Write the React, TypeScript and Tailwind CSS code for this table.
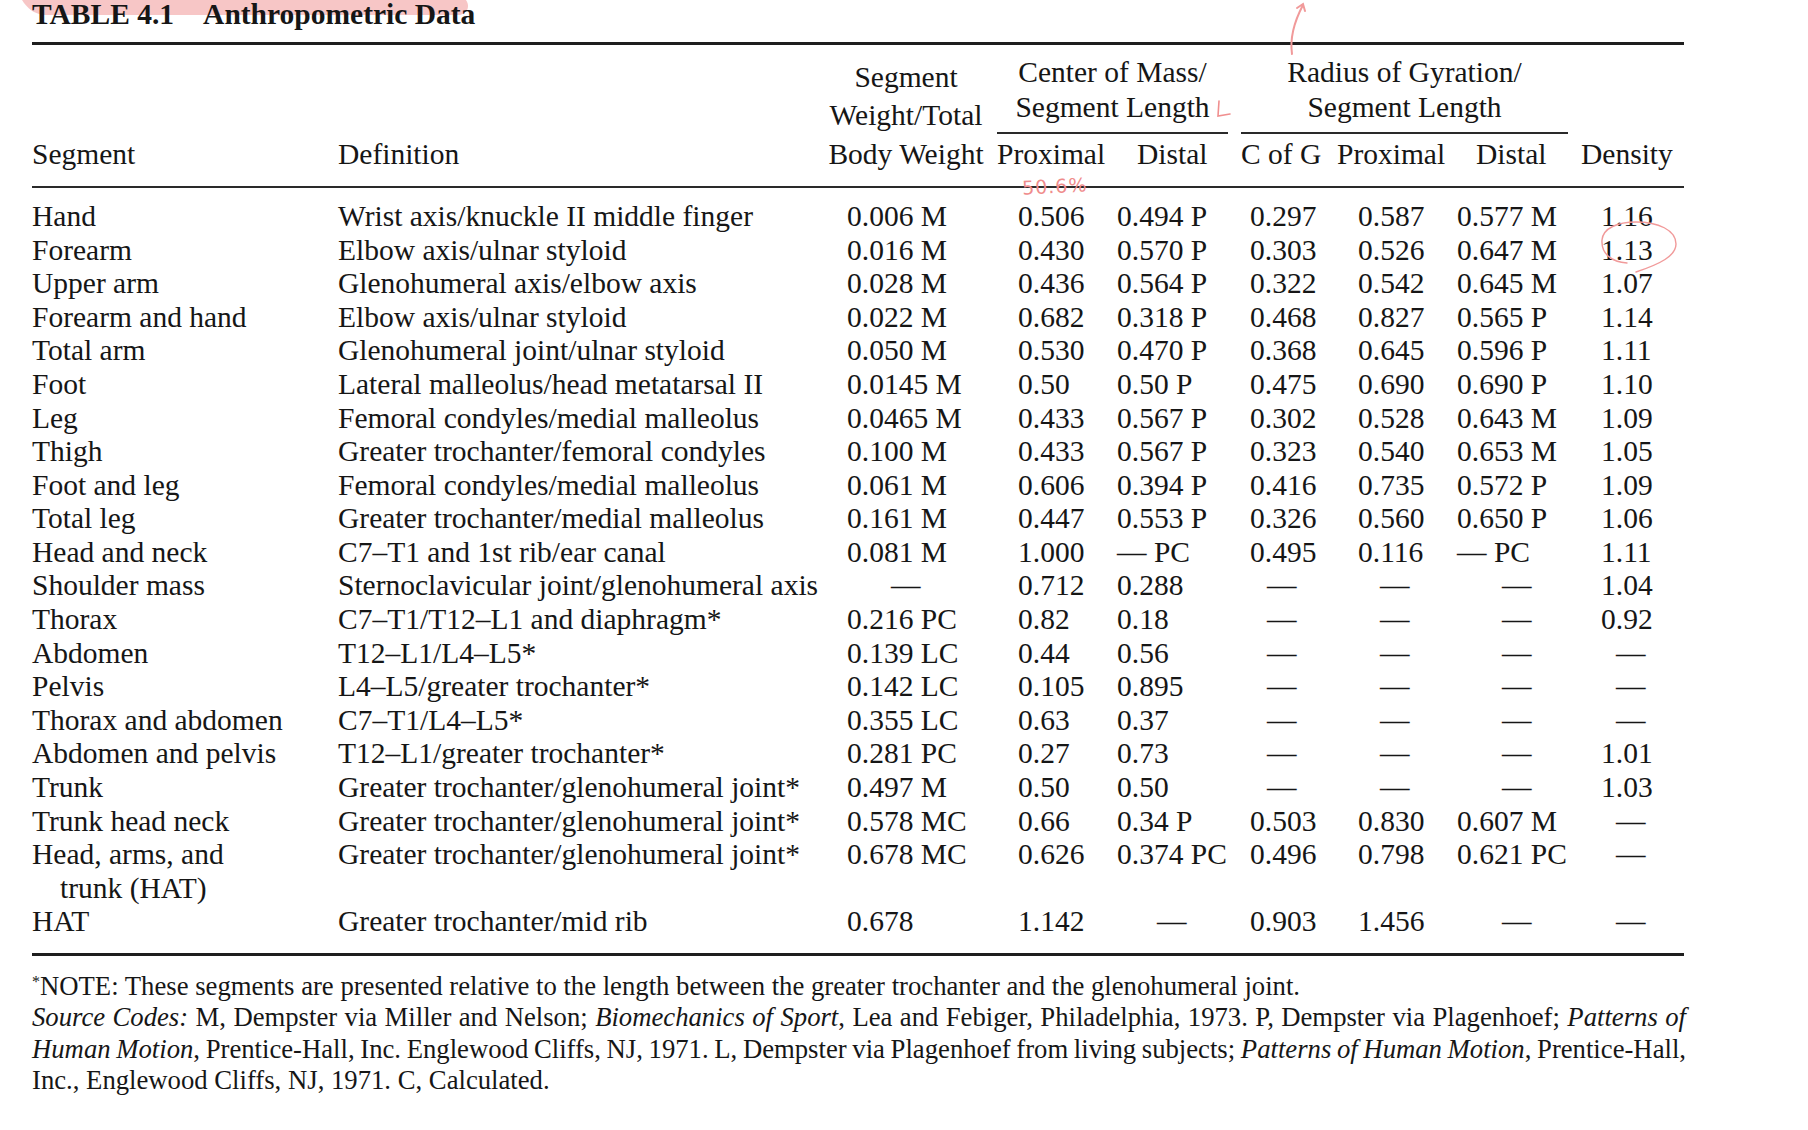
import React from 'react';

const rows: string[][] = [
  ['Hand', 'Wrist axis/knuckle II middle finger', '0.006 M', '0.506', '0.494 P', '0.297', '0.587', '0.577 M', '1.16'],
  ['Forearm', 'Elbow axis/ulnar styloid', '0.016 M', '0.430', '0.570 P', '0.303', '0.526', '0.647 M', '1.13'],
  ['Upper arm', 'Glenohumeral axis/elbow axis', '0.028 M', '0.436', '0.564 P', '0.322', '0.542', '0.645 M', '1.07'],
  ['Forearm and hand', 'Elbow axis/ulnar styloid', '0.022 M', '0.682', '0.318 P', '0.468', '0.827', '0.565 P', '1.14'],
  ['Total arm', 'Glenohumeral joint/ulnar styloid', '0.050 M', '0.530', '0.470 P', '0.368', '0.645', '0.596 P', '1.11'],
  ['Foot', 'Lateral malleolus/head metatarsal II', '0.0145 M', '0.50', '0.50 P', '0.475', '0.690', '0.690 P', '1.10'],
  ['Leg', 'Femoral condyles/medial malleolus', '0.0465 M', '0.433', '0.567 P', '0.302', '0.528', '0.643 M', '1.09'],
  ['Thigh', 'Greater trochanter/femoral condyles', '0.100 M', '0.433', '0.567 P', '0.323', '0.540', '0.653 M', '1.05'],
  ['Foot and leg', 'Femoral condyles/medial malleolus', '0.061 M', '0.606', '0.394 P', '0.416', '0.735', '0.572 P', '1.09'],
  ['Total leg', 'Greater trochanter/medial malleolus', '0.161 M', '0.447', '0.553 P', '0.326', '0.560', '0.650 P', '1.06'],
  ['Head and neck', 'C7\u2013T1 and 1st rib/ear canal', '0.081 M', '1.000', '\u2014 PC', '0.495', '0.116', '\u2014 PC', '1.11'],
  ['Shoulder mass', 'Sternoclavicular joint/glenohumeral axis', '\u2014', '0.712', '0.288', '\u2014', '\u2014', '\u2014', '1.04'],
  ['Thorax', 'C7\u2013T1/T12\u2013L1 and diaphragm*', '0.216 PC', '0.82', '0.18', '\u2014', '\u2014', '\u2014', '0.92'],
  ['Abdomen', 'T12\u2013L1/L4\u2013L5*', '0.139 LC', '0.44', '0.56', '\u2014', '\u2014', '\u2014', '\u2014'],
  ['Pelvis', 'L4\u2013L5/greater trochanter*', '0.142 LC', '0.105', '0.895', '\u2014', '\u2014', '\u2014', '\u2014'],
  ['Thorax and abdomen', 'C7\u2013T1/L4\u2013L5*', '0.355 LC', '0.63', '0.37', '\u2014', '\u2014', '\u2014', '\u2014'],
  ['Abdomen and pelvis', 'T12\u2013L1/greater trochanter*', '0.281 PC', '0.27', '0.73', '\u2014', '\u2014', '\u2014', '1.01'],
  ['Trunk', 'Greater trochanter/glenohumeral joint*', '0.497 M', '0.50', '0.50', '\u2014', '\u2014', '\u2014', '1.03'],
  ['Trunk head neck', 'Greater trochanter/glenohumeral joint*', '0.578 MC', '0.66', '0.34 P', '0.503', '0.830', '0.607 M', '\u2014'],
  ['HAT_MULTI', 'Greater trochanter/glenohumeral joint*', '0.678 MC', '0.626', '0.374 PC', '0.496', '0.798', '0.621 PC', '\u2014'],
  ['HAT', 'Greater trochanter/mid rib', '0.678', '1.142', '\u2014', '0.903', '1.456', '\u2014', '\u2014'],
];

const dashPad = ['', '', 'pl-[44px]', 'pl-[30px]', 'pl-[40px]', 'pl-[17px]', 'pl-[22px]', 'pl-[45px]', 'pl-[15px]'];

function Annotations() {
  return (
    <svg className="absolute left-0 top-0 pointer-events-none" width="1808" height="1130" viewBox="0 0 1808 1130">
      <path d="M1292 54 C1290 40 1294 22 1303 5" fill="none" stroke="#f19a9a" strokeWidth="2" strokeLinecap="round" />
      <path d="M1297 8 L1303 4 L1305 11" fill="none" stroke="#f19a9a" strokeWidth="2" strokeLinecap="round" />
      <path d="M1219 101 L1218 116 L1230 114" fill="none" stroke="#f08f8f" strokeWidth="1.6" strokeLinecap="round" />
      <path d="M1627 263 C1612 262 1601 254 1602 240 C1603 228 1618 222 1636 222 C1658 222 1676 230 1676 244 C1676 256 1660 264 1636 272" fill="none" stroke="#f19a9a" strokeWidth="1.4" strokeLinecap="round" />
    </svg>
  );
}

export default function App() {
  return (
    <div className="relative w-[1808px] h-[1130px] bg-white overflow-hidden text-[#161616] font-['Liberation_Serif','Times_New_Roman',serif]">
      <svg className="absolute left-0 top-0" width="520" height="20" viewBox="0 0 520 20">
        <path d="M22 0 L466 0 C470 6 468 13 460 15 L44 15 C34 14 27 8 22 0 Z" fill="rgba(236,120,120,0.42)" />
      </svg>
      <div className="relative pl-[32px]">
        <div className="flex h-[27px] pt-[1px] text-[29.5px] leading-[26px] font-bold whitespace-nowrap">
          <span>TABLE 4.1</span>
          <span className="ml-[29px]">Anthropometric Data</span>
        </div>
        <div className="mt-[15px] w-[1652px] h-[3px] bg-[#1e1e1e]" />

        <div className="mt-[10.75px] flex items-end w-[1652px] text-[29.5px] leading-[33.6px] whitespace-nowrap">
          <div className="w-[306px]">Segment</div>
          <div className="w-[491px]">Definition</div>
          <div className="w-[154px] flex flex-col items-center gap-[4.9px]">
            <div>Segment</div>
            <div>Weight/Total</div>
            <div>Body Weight</div>
          </div>
          <div className="ml-[14px] w-[231px] flex flex-col">
            <div className="flex flex-col items-center gap-[1.4px]">
              <div>Center of Mass/</div>
              <div>Segment Length</div>
            </div>
            <div className="mt-[7.65px] h-[2px] bg-[#2a2a2a]" />
            <div className="mt-[4px] flex">
              <div className="w-[140px]">Proximal</div>
              <div>Distal</div>
            </div>
          </div>
          <div className="ml-[13px] w-[327px] flex flex-col">
            <div className="flex flex-col items-center gap-[1.4px]">
              <div>Radius of Gyration/</div>
              <div>Segment Length</div>
            </div>
            <div className="mt-[7.65px] h-[2px] bg-[#2a2a2a]" />
            <div className="mt-[4px] flex">
              <div className="w-[96px]">C of G</div>
              <div className="w-[139px]">Proximal</div>
              <div>Distal</div>
            </div>
          </div>
          <div className="ml-[13px]">Density</div>
        </div>
        <div className="mt-[14px] w-[1652px] h-[2px] bg-[#2a2a2a]" />

        <div className="mt-[12.4px] text-[29.5px] leading-[33.6px]">
          {rows.map((r, ri) => (
            <div key={ri} className="grid grid-cols-[306px_509px_171px_99px_133px_108px_99px_144px_83px]">
              {r.map((v, i) => {
                if (i === 0 && v === 'HAT_MULTI') {
                  return (
                    <div key={i} className="whitespace-nowrap">
                      <div>Head, arms, and</div>
                      <div className="pl-[28px]">trunk (HAT)</div>
                    </div>
                  );
                }
                return (
                  <div key={i} className={`whitespace-nowrap ${v === '\u2014' ? dashPad[i] : ''}`}>
                    {v}
                  </div>
                );
              })}
            </div>
          ))}
        </div>
        <div className="mt-[13.5px] w-[1652px] h-[3.5px] bg-[#1e1e1e]" />

        <div className="mt-[14.5px] w-[1654px] text-[26.7px] leading-[31.5px]">
          <div className="whitespace-nowrap">
            <sup className="text-[16px]">*</sup>NOTE: These segments are presented relative to the length between the greater trochanter and the glenohumeral joint.
          </div>
          <div className="text-justify [text-align-last:justify] [word-spacing:-4px]">
            <i>Source Codes:</i> M, Dempster via Miller and Nelson; <i>Biomechanics of Sport</i>, Lea and Febiger, Philadelphia, 1973. P, Dempster via Plagenhoef; <i>Patterns of</i>
          </div>
          <div className="text-justify [text-align-last:justify] [word-spacing:-5px]">
            <i>Human Motion</i>, Prentice-Hall, Inc. Englewood Cliffs, NJ, 1971. L, Dempster via Plagenhoef from living subjects; <i>Patterns of Human Motion</i>, Prentice-Hall,
          </div>
          <div className="whitespace-nowrap">Inc., Englewood Cliffs, NJ, 1971. C, Calculated.</div>
        </div>
      </div>
      <span className="absolute left-[1022px] top-[175px] text-[19px] leading-[22px] text-[#ef8c8c] font-['DejaVu_Sans',sans-serif] tracking-[1px] -rotate-3">50.6%</span>
      <Annotations />
    </div>
  );
}
